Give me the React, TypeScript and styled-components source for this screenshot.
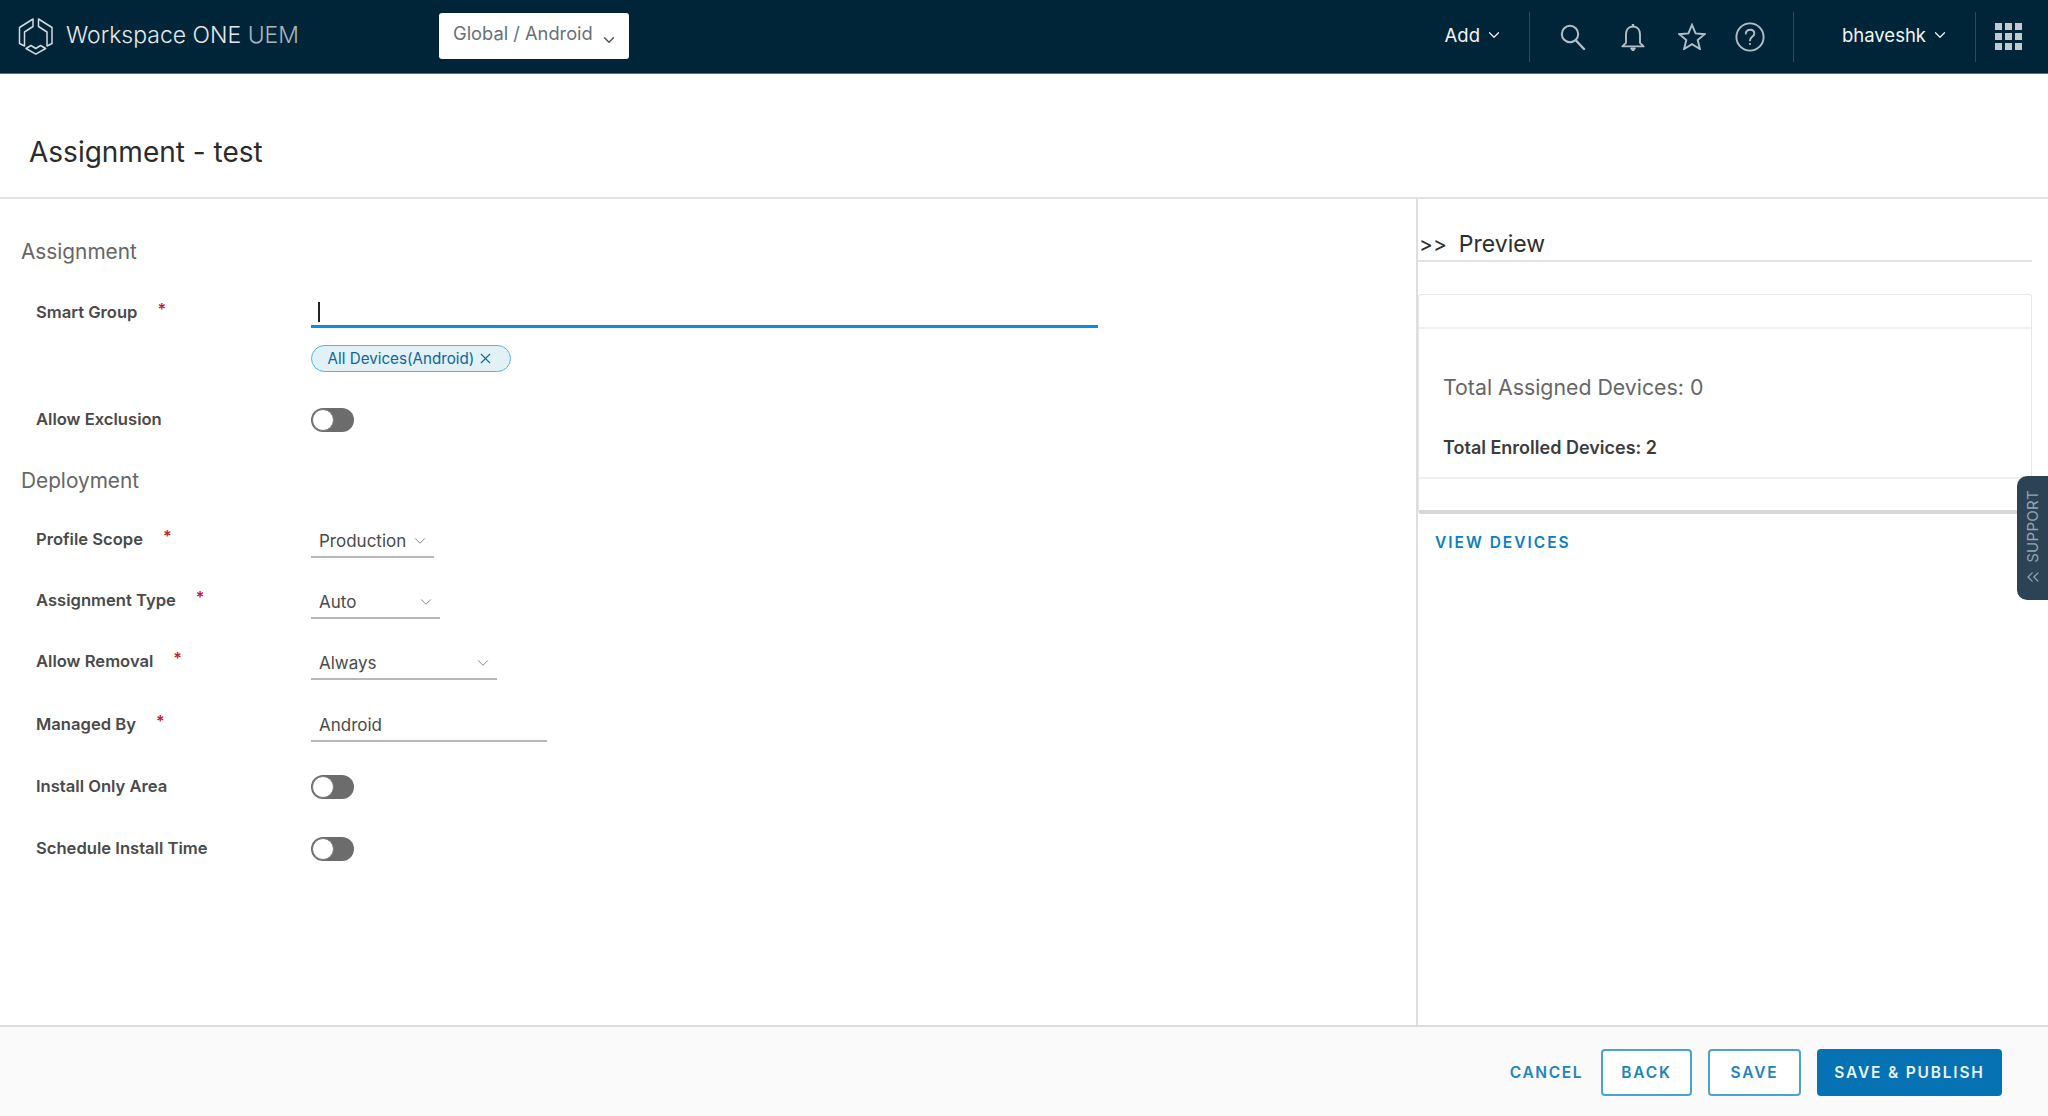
import { ChevronDown, ChevronsLeft, X } from "lucide-react";
import { createGlobalStyle, styled } from "styled-components";

const GlobalStyle = createGlobalStyle`
  html, body {
    margin: 0;
    padding: 0;
    background: #fff;
  }
  body {
    font-family: Inter, "Liberation Sans", sans-serif;
    color: #333;
    overflow: hidden;
  }
`;

const Page = styled.div`
  position: relative;
  width: 2048px;
  height: 1116px;
  display: flex;
  flex-direction: column;
`;

const TopBar = styled.header`
  height: 74px;
  flex: none;
  box-sizing: border-box;
  display: flex;
  align-items: center;
  background: #002538;
  border-bottom: 1px solid #5b7286;
  color: #fff;
`;

const Brand = styled.div`
  display: flex;
  align-items: center;
  width: 439px;
  padding-left: 18px;
  box-sizing: border-box;
  gap: 12px;
  font-size: 23px;
  font-weight: 300;
  color: #e4e8eb;
`;

const BrandText = styled.span`
  padding-bottom: 3px;
`;

const BrandDim = styled.span`
  color: #a9b6bf;
`;

const OrgPicker = styled.div`
  width: 190px;
  height: 46px;
  margin-top: -1px;
  box-sizing: border-box;
  padding: 0 14px 6px;
  display: flex;
  align-items: center;
  justify-content: space-between;
  background: #fff;
  border-radius: 3px;
  color: #667079;
  font-size: 18.3px;
`;

const OrgChevron = styled(ChevronDown)`
  margin: 14px -3px 0 0;
`;

const TopActions = styled.div`
  margin-left: auto;
  display: flex;
  align-items: center;
  height: 100%;
`;

const MenuLink = styled.div<{ $width: number }>`
  width: ${(p) => p.$width}px;
  display: flex;
  align-items: center;
  justify-content: flex-end;
  gap: 5px;
  padding: 0 26px 3px 0;
  box-sizing: border-box;
  font-size: 18.5px;
  color: #f2f4f5;
`;

const Separator = styled.div`
  width: 1px;
  height: 50px;
  background: #2a4a5e;
`;

const IconGroup = styled.div`
  width: 263px;
  box-sizing: border-box;
  padding-left: 30px;
  display: grid;
  grid-template-columns: 61px 57px 57px 30px;
  align-items: center;
  color: #b3bfc7;
`;

const AppGrid = styled.div`
  width: 72px;
  box-sizing: border-box;
  padding-left: 19px;
  display: grid;
  grid-template-columns: repeat(3, 7px);
  gap: 3px;
`;

const AppDot = styled.span`
  height: 7px;
  background: #c1cad0;
`;

const TitleBar = styled.div`
  height: 125px;
  flex: none;
  box-sizing: border-box;
  display: flex;
  align-items: center;
  padding: 32px 0 0 29px;
  border-bottom: 2px solid #e3e3e3;
`;

const Title = styled.h1`
  margin: 0;
  font-size: 28px;
  font-weight: 400;
  color: #2b2b2b;
`;

const Body = styled.div`
  flex: 1;
  display: flex;
  min-height: 0;
`;

const FormPanel = styled.main`
  width: 1418px;
  flex: none;
  box-sizing: border-box;
  border-right: 2px solid #dedede;
  padding: 37px 0 0 20px;
`;

const SectionHeading = styled.h2<{ $top?: number; $gap: number }>`
  margin: ${(p) => p.$top ?? 0}px 0 ${(p) => p.$gap}px;
  padding-left: 1px;
  height: 32px;
  line-height: 32px;
  font-size: 20.8px;
  font-weight: 400;
  color: #666;
`;

const FieldRow = styled.div<{ $height?: number }>`
  display: grid;
  grid-template-columns: 275px 1fr;
  align-items: center;
  height: ${(p) => p.$height ?? 61}px;
  padding-left: 16px;
`;

const FieldLabel = styled.label`
  font-size: 16.6px;
  font-weight: 600;
  color: #4a4a4a;
`;

const Required = styled.span`
  display: inline-block;
  margin-left: 20px;
  color: #c21d30;
  font-size: 16px;
  line-height: 1;
  vertical-align: 3px;
`;

const ChipSlot = styled.div`
  display: flex;
  margin: 11px 0 0 291px;
  height: 47px;
`;

const FocusInput = styled.div`
  width: 787px;
  height: 30px;
  box-sizing: border-box;
  border-bottom: 3px solid #0a8fd6;
  padding: 4px 0 0 7px;
  margin-top: 4px;
`;

const Caret = styled.div`
  width: 1.5px;
  height: 20px;
  background: #222;
`;

const Chip = styled.div`
  width: 200px;
  height: 27px;
  box-sizing: border-box;
  display: flex;
  align-items: center;
  justify-content: center;
  gap: 3px;
  background: #e1f1f6;
  border: 1.5px solid #55b4dc;
  border-radius: 14px;
  font-size: 15.2px;
  color: #10659b;
`;

const Select = styled.div<{ $width: number }>`
  width: ${(p) => p.$width}px;
  height: 30px;
  box-sizing: border-box;
  display: flex;
  align-items: center;
  justify-content: space-between;
  padding: 0 5px 2px 8px;
  margin-top: 8px;
  border-bottom: 2px solid #b8b8b8;
  font-size: 17px;
  color: #4a4a4a;
`;

const SwitchTrack = styled.div`
  position: relative;
  width: 43px;
  height: 24px;
  box-sizing: border-box;
  background: #6c6c6c;
  border-radius: 12px;
  margin-top: 2px;
`;

const SwitchKnob = styled.span`
  position: absolute;
  left: 1px;
  top: 1px;
  width: 22px;
  height: 22px;
  box-sizing: border-box;
  background: #fff;
  border: 1.5px solid #7a7a7a;
  border-radius: 50%;
`;

const PreviewPanel = styled.aside`
  flex: 1;
  box-sizing: border-box;
  padding: 26px 16px 0 0;
`;

const PreviewHeader = styled.div`
  height: 37px;
  box-sizing: border-box;
  display: flex;
  align-items: center;
  gap: 12px;
  padding: 3px 0 0 1px;
  border-bottom: 2px solid #e3e3e3;
  font-size: 23px;
  color: #2d2d2d;
`;

const CollapseMark = styled.span`
  font-size: 21px;
`;

const Card = styled.section`
  margin-top: 32px;
  height: 220px;
  box-sizing: border-box;
  border: 1px solid #e6e6e6;
  border-bottom: 4px solid #d8d8d8;
  border-radius: 3px;
  display: flex;
  flex-direction: column;
`;

const CardBand = styled.div<{ $top?: boolean }>`
  height: ${(p) => (p.$top ? 32 : 31)}px;
  flex: none;
  border-${(p) => (p.$top ? "bottom" : "top")}: 2px solid #f0f0f0;
`;

const CardBody = styled.div`
  flex: 1;
  padding: 44px 0 0 24px;
`;

const TotalAssigned = styled.div`
  font-size: 21.3px;
  line-height: 28px;
  color: #666;
`;

const TotalEnrolled = styled.div`
  margin-top: 33px;
  font-size: 18px;
  line-height: 28px;
  font-weight: 600;
  color: #3c3c3c;
`;

const ViewLink = styled.a`
  display: block;
  margin: 18px 0 0 17px;
  font-size: 15.5px;
  font-weight: 600;
  letter-spacing: 2px;
  line-height: 22px;
  color: #0c7fc0;
`;

const SupportTab = styled.div`
  position: absolute;
  right: 0;
  top: 476px;
  width: 31px;
  height: 124px;
  box-sizing: border-box;
  display: flex;
  flex-direction: column;
  align-items: center;
  justify-content: flex-end;
  gap: 4px;
  padding-bottom: 13px;
  background: #2c4356;
  border-radius: 10px 0 0 10px;
  color: #95a6b3;
`;

const SupportLabel = styled.span`
  writing-mode: vertical-rl;
  transform: rotate(180deg);
  font-size: 15px;
  letter-spacing: 0.3px;
`;

const Footer = styled.footer`
  height: 91px;
  flex: none;
  box-sizing: border-box;
  display: flex;
  align-items: center;
  justify-content: flex-end;
  gap: 16px;
  padding: 2px 46px 0 0;
  background: #fafafa;
  border-top: 2px solid #dcdcdc;
`;

const TextButton = styled.button`
  border: 0;
  background: none;
  padding: 0;
  margin-right: 2px;
  font: 600 15.5px Inter, sans-serif;
  letter-spacing: 1.6px;
  color: #1c84bf;
`;

const FooterButton = styled.button<{ $width: number; $primary?: boolean }>`
  width: ${(p) => p.$width}px;
  height: 47px;
  padding: 0;
  border-radius: 4px;
  border: 2px solid ${(p) => (p.$primary ? "#0672b3" : "#4ba3d1")};
  background: ${(p) => (p.$primary ? "#0672b3" : "#fff")};
  color: ${(p) => (p.$primary ? "#e8f2f8" : "#1c84bf")};
  font: 600 15.5px Inter, sans-serif;
  letter-spacing: 1.8px;
`;

function Logo() {
  return (
    <svg width="36" height="37" viewBox="0 0 36 37" fill="none" stroke="#d4dade" strokeWidth="1.5" strokeLinejoin="round">
      <path d="M15 1 1.5 9.5v16L6.5 28V14L15 8.5z" />
      <path d="M20.5 1 34 9.5v16L29 28V14l-8.5-5.5z" />
      <path d="m8 30.5 5-3 4.8 3 4.8-3 5 3-9.8 5.6z" />
    </svg>
  );
}

function SearchIcon() {
  return (
    <svg width="26" height="26" viewBox="0 0 26 26" fill="none" stroke="currentColor" strokeWidth="2" strokeLinecap="round">
      <circle cx="10" cy="10" r="8.2" />
      <path d="m16 16.5 8 8.5" strokeWidth="2.4" />
    </svg>
  );
}

function BellIcon() {
  return (
    <svg width="24" height="28" viewBox="0 0 24 28" fill="none" stroke="currentColor" strokeWidth="1.9" strokeLinejoin="round">
      <path d="M12 3.5c-4.8 0-7 3.6-7 7.8v8.5l-3.6 3.6h21.2L19 19.8v-8.5c0-4.2-2.2-7.8-7-7.8z" />
      <path d="M12 1v2.5" strokeWidth="2.4" />
      <path d="M10.2 25.5h3.6L12 27.6z" fill="currentColor" />
    </svg>
  );
}

function StarIcon() {
  return (
    <svg width="28" height="27" viewBox="0 0 28 27" fill="none" stroke="currentColor" strokeWidth="1.9" strokeLinejoin="miter">
      <path d="m14 1.8 3.6 8.6 9 .8-6.9 5.9 2.2 8.9L14 21.2l-7.9 4.8 2.2-8.9-6.9-5.9 9-.8z" />
    </svg>
  );
}

function HelpIcon() {
  return (
    <svg width="30" height="30" viewBox="0 0 30 30" fill="none" stroke="currentColor" strokeWidth="1.9" strokeLinecap="round">
      <circle cx="15" cy="15" r="13.6" />
      <path d="M10.8 11.6c.3-2.4 2-3.8 4.3-3.8 2.5 0 4.2 1.5 4.2 3.6 0 3.5-4.3 3.4-4.3 7" />
      <circle cx="15" cy="22" r="1.1" fill="currentColor" stroke="none" />
    </svg>
  );
}

function Toggle() {
  return (
    <SwitchTrack>
      <SwitchKnob />
    </SwitchTrack>
  );
}

function Mandatory() {
  return <Required>*</Required>;
}

const selectRows = [
  { label: "Profile Scope", value: "Production", width: 123 },
  { label: "Assignment Type", value: "Auto", width: 129 },
  { label: "Allow Removal", value: "Always", width: 186 },
];

export default function App() {
  return (
    <Page>
      <GlobalStyle />
      <TopBar>
        <Brand>
          <Logo />
          <BrandText>
            Workspace ONE <BrandDim>UEM</BrandDim>
          </BrandText>
        </Brand>
        <OrgPicker>
          Global / Android
          <OrgChevron size={18} color="#555" />
        </OrgPicker>
        <TopActions>
          <MenuLink $width={100}>
            Add
            <ChevronDown size={18} strokeWidth={1.6} />
          </MenuLink>
          <Separator />
          <IconGroup>
            <SearchIcon />
            <BellIcon />
            <StarIcon />
            <HelpIcon />
          </IconGroup>
          <Separator />
          <MenuLink $width={181}>
            bhaveshk
            <ChevronDown size={18} strokeWidth={1.6} />
          </MenuLink>
          <Separator />
          <AppGrid>
            {Array.from({ length: 9 }, (_, i) => (
              <AppDot key={i} />
            ))}
          </AppGrid>
        </TopActions>
      </TopBar>

      <TitleBar>
        <Title>Assignment - test</Title>
      </TitleBar>

      <Body>
        <FormPanel>
          <SectionHeading $gap={20}>Assignment</SectionHeading>
          <FieldRow $height={46}>
            <FieldLabel>
              Smart Group
              <Mandatory />
            </FieldLabel>
            <FocusInput>
              <Caret />
            </FocusInput>
          </FieldRow>
          <ChipSlot>
            <Chip>
              All Devices(Android)
              <X size={17} strokeWidth={1.5} />
            </Chip>
          </ChipSlot>
          <FieldRow $height={54}>
            <FieldLabel>Allow Exclusion</FieldLabel>
            <Toggle />
          </FieldRow>
          <SectionHeading $top={19} $gap={11}>
            Deployment
          </SectionHeading>
          {selectRows.map((row) => (
            <FieldRow key={row.label}>
              <FieldLabel>
                {row.label}
                <Mandatory />
              </FieldLabel>
              <Select $width={row.width}>
                {row.value}
                <ChevronDown size={18} strokeWidth={1.2} color="#777" />
              </Select>
            </FieldRow>
          ))}
          <FieldRow $height={64}>
            <FieldLabel>
              Managed By
              <Mandatory />
            </FieldLabel>
            <Select $width={236}>Android</Select>
          </FieldRow>
          <FieldRow $height={62}>
            <FieldLabel>Install Only Area</FieldLabel>
            <Toggle />
          </FieldRow>
          <FieldRow>
            <FieldLabel>Schedule Install Time</FieldLabel>
            <Toggle />
          </FieldRow>
        </FormPanel>

        <PreviewPanel>
          <PreviewHeader>
            <CollapseMark>&gt;&gt;</CollapseMark>
            Preview
          </PreviewHeader>
          <Card>
            <CardBand $top />
            <CardBody>
              <TotalAssigned>Total Assigned Devices: 0</TotalAssigned>
              <TotalEnrolled>Total Enrolled Devices: 2</TotalEnrolled>
            </CardBody>
            <CardBand />
          </Card>
          <ViewLink>VIEW DEVICES</ViewLink>
        </PreviewPanel>
      </Body>

      <Footer>
        <TextButton>CANCEL</TextButton>
        <FooterButton $width={91}>BACK</FooterButton>
        <FooterButton $width={93}>SAVE</FooterButton>
        <FooterButton $width={185} $primary>
          SAVE &amp; PUBLISH
        </FooterButton>
      </Footer>

      <SupportTab>
        <SupportLabel>SUPPORT</SupportLabel>
        <ChevronsLeft size={20} strokeWidth={1.5} />
      </SupportTab>
    </Page>
  );
}
